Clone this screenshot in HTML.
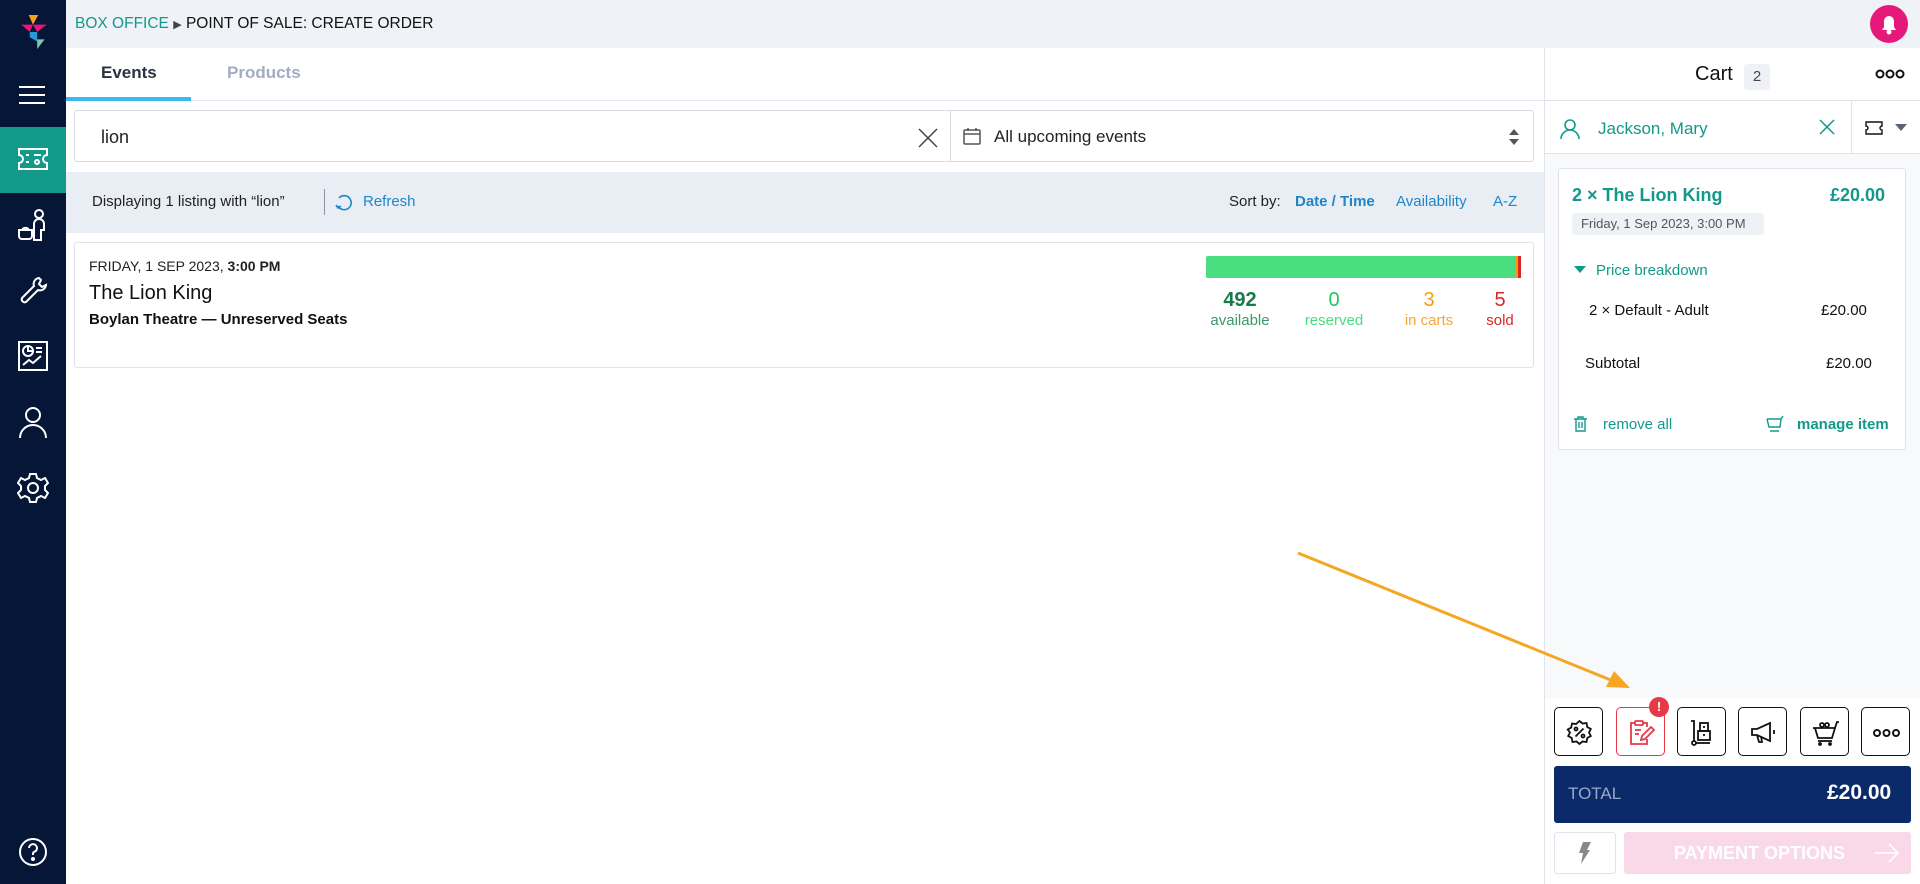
<!DOCTYPE html>
<html><head><meta charset="utf-8"><style>
*{box-sizing:border-box;margin:0;padding:0}
body{width:1920px;height:884px;overflow:hidden;font-family:"Liberation Sans",sans-serif;background:#fff;position:relative;color:#111}
.abs{position:absolute}
.side{left:0;top:0;width:66px;height:884px;background:#061636}
.side svg{position:absolute;left:17px}
.top{left:66px;top:0;width:1854px;height:48px;background:#eff2f7}
.teal{color:#12998a}
.btn{position:absolute;top:707px;width:49px;height:49px;border:1.5px solid #111;border-radius:5px;background:#fff}
.btn svg{position:absolute;left:11px;top:11px}
</style></head><body>
<div class="abs side">
 <svg style="top:14px;left:20px" width="28" height="36" viewBox="0 0 26 34"><polygon points="8,1 17,1 12,10" fill="#f7a21b"/><polygon points="1,10 12,10 9,17" fill="#e6197a"/><polygon points="12,10 25,10 16,17" fill="#e6197a"/><polygon points="9,17 16,17 16,26 9,22" fill="#2a9ad6"/><polygon points="16,24 23,24 16,33" fill="#7fc9a8"/></svg>
 <svg style="top:84px" width="30" height="22" viewBox="0 0 30 22" stroke="#fff" stroke-width="2"><line x1="2" y1="3" x2="28" y2="3"/><line x1="2" y1="11" x2="28" y2="11"/><line x1="2" y1="19" x2="28" y2="19"/></svg>
 <div class="abs" style="left:0;top:127px;width:66px;height:66px;background:#12998a"></div>
 <svg style="top:146px" width="32" height="26" viewBox="0 0 32 26" fill="none" stroke="#fff" stroke-width="2"><path d="M2 3h28v6a4 4 0 0 0 0 8v6H2v-6a4 4 0 0 0 0-8z"/><line x1="9" y1="9" x2="12" y2="9"/><line x1="9" y1="16" x2="12" y2="16"/><line x1="17" y1="9" x2="24" y2="9"/><circle cx="20" cy="16" r="2"/></svg>
 <svg style="top:208px" width="32" height="34" viewBox="0 0 32 34" fill="none" stroke="#fff" stroke-width="2"><circle cx="22" cy="6" r="4"/><path d="M17 32V16a5 5 0 0 1 10 0v6h-3v10z"/><path d="M2 22h13v6a3 3 0 0 1-3 3H5a3 3 0 0 1-3-3z"/><path d="M5 22a4 4 0 0 1 7 0"/></svg>
 <svg style="top:275px" width="32" height="32" viewBox="0 0 32 32" fill="none" stroke="#fff" stroke-width="2"><path d="M22 3a6 6 0 0 0-5 8L5 23a3 3 0 0 0 4 4l12-12a6 6 0 0 0 8-5l-4 2-3-3 2-4z"/></svg>
 <svg style="top:340px" width="32" height="32" viewBox="0 0 32 32" fill="none" stroke="#fff" stroke-width="2"><rect x="2" y="2" width="28" height="28"/><circle cx="11" cy="11" r="5"/><path d="M11 6v5h5"/><line x1="19" y1="8" x2="25" y2="8"/><line x1="19" y1="12" x2="25" y2="12"/><path d="M6 25l6-5 4 3 8-7"/></svg>
 <svg style="top:405px" width="32" height="34" viewBox="0 0 32 34" fill="none" stroke="#fff" stroke-width="2"><circle cx="16" cy="10" r="7"/><path d="M3 33a13 13 0 0 1 26 0"/></svg>
 <svg style="top:472px" width="32" height="32" viewBox="0 0 32 32" fill="none" stroke="#fff" stroke-width="2"><circle cx="16" cy="16" r="5"/><path d="M13 2h6l1 4 4 2 4-2 3 5-3 3v4l3 3-3 5-4-2-4 2-1 4h-6l-1-4-4-2-4 2-3-5 3-3v-4l-3-3 3-5 4 2 4-2z"/></svg>
 <svg style="top:836px" width="32" height="32" viewBox="0 0 32 32" fill="none" stroke="#fff" stroke-width="2"><circle cx="16" cy="16" r="13"/><path d="M12 12a4 4 0 1 1 5 4c-1 .5-1 1-1 3"/><circle cx="16" cy="23" r="1" fill="#fff"/></svg>
</div>
<div class="abs top">
 <div class="abs" style="left:9px;top:15px;font-size:15.5px"><span class="teal">BOX OFFICE</span> <span style="color:#444;font-size:11px">&#9654;</span> POINT OF SALE: CREATE ORDER</div>
 <div class="abs" style="left:1804px;top:5px;width:38px;height:38px;border-radius:50%;background:#e6197a"><svg width="38" height="38" viewBox="0 0 38 38"><path d="M12 25h14l-2-3v-6a5 5 0 0 0-10 0v6z" fill="#fff"/><circle cx="19" cy="27" r="2.5" fill="#fff"/></svg></div>
</div>
<div class="abs" style="left:66px;top:48px;width:1478px;height:53px;border-bottom:1px solid #e4e8ee"></div>
<div class="abs" style="left:101px;top:63px;font-size:17px;font-weight:bold;color:#2b3240">Events</div>
<div class="abs" style="left:227px;top:63px;font-size:17px;font-weight:bold;color:#a2aec0">Products</div>
<div class="abs" style="left:66px;top:97px;width:125px;height:4px;background:#3bb8ee"></div>
<div class="abs" style="left:74px;top:110px;width:1460px;height:52px;border:1px solid #d7dce3;border-radius:3px"></div>
<div class="abs" style="left:101px;top:127px;font-size:18px;color:#222">lion</div>
<svg class="abs" style="left:918px;top:128px" width="20" height="20" stroke="#444" stroke-width="1.5"><line x1="1" y1="1" x2="19" y2="19"/><line x1="19" y1="1" x2="1" y2="19"/></svg>
<div class="abs" style="left:950px;top:111px;width:1px;height:50px;background:#d7dce3"></div>
<svg class="abs" style="left:963px;top:127px" width="18" height="18" fill="none" stroke="#555" stroke-width="1.5"><rect x="1" y="3" width="16" height="14" rx="1"/><line x1="1" y1="7" x2="17" y2="7"/><line x1="5" y1="1" x2="5" y2="4"/><line x1="13" y1="1" x2="13" y2="4"/></svg>
<div class="abs" style="left:994px;top:127px;font-size:17px;color:#222">All upcoming events</div>
<svg class="abs" style="left:1508px;top:128px" width="12" height="18" fill="#555"><polygon points="6,1 11,7 1,7"/><polygon points="6,17 11,11 1,11"/></svg>
<div class="abs" style="left:66px;top:172px;width:1478px;height:61px;background:#e9eef5"></div>
<div class="abs" style="left:92px;top:193px;font-size:15px;color:#222">Displaying 1 listing with “lion”</div>
<div class="abs" style="left:324px;top:189px;width:1px;height:26px;background:#8895a8"></div>
<svg class="abs" style="left:334px;top:192px" width="20" height="20" fill="none" stroke="#1e86c8" stroke-width="1.6"><path d="M4 14a7 7 0 1 0 1-8"/><polyline points="2,13 4,16 7,14"/></svg>
<div class="abs" style="left:363px;top:193px;font-size:15px;color:#1e86c8">Refresh</div>
<div class="abs" style="left:1229px;top:193px;font-size:15px;color:#222">Sort by:</div>
<div class="abs" style="left:1295px;top:193px;font-size:15px;color:#1e86c8;font-weight:bold">Date / Time</div>
<div class="abs" style="left:1396px;top:193px;font-size:15px;color:#1e86c8">Availability</div>
<div class="abs" style="left:1493px;top:193px;font-size:15px;color:#1e86c8">A-Z</div>
<div class="abs" style="left:74px;top:242px;width:1460px;height:126px;border:1px solid #dfe3e9;border-radius:3px"></div>
<div class="abs" style="left:89px;top:258px;font-size:14px;color:#222">FRIDAY, 1 SEP 2023, <b>3:00 PM</b></div>
<div class="abs" style="left:89px;top:282px;font-size:20px;color:#111">The Lion King</div>
<div class="abs" style="left:89px;top:311px;font-size:15px;font-weight:bold;color:#111">Boylan Theatre — Unreserved Seats</div>
<div class="abs" style="left:1206px;top:256px;width:313px;height:22px;background:#4ade80;border-radius:2px"></div>
<div class="abs" style="left:1516px;top:256px;width:2px;height:22px;background:#f59e0b"></div>
<div class="abs" style="left:1518px;top:256px;width:3px;height:22px;background:#dc2626"></div>
<div class="abs" style="left:1196px;top:289px;width:88px;text-align:center;font-size:20px;font-weight:bold;color:#167a4b">492</div>
<div class="abs" style="left:1196px;top:312px;width:88px;text-align:center;font-size:15px;color:#3a9a68">available</div>
<div class="abs" style="left:1290px;top:289px;width:88px;text-align:center;font-size:20px;color:#22c55e">0</div>
<div class="abs" style="left:1290px;top:312px;width:88px;text-align:center;font-size:15px;color:#4ade80">reserved</div>
<div class="abs" style="left:1385px;top:289px;width:88px;text-align:center;font-size:20px;color:#f59e0b">3</div>
<div class="abs" style="left:1385px;top:312px;width:88px;text-align:center;font-size:15px;color:#f8a53a">in carts</div>
<div class="abs" style="left:1470px;top:289px;width:60px;text-align:center;font-size:20px;color:#dc2626">5</div>
<div class="abs" style="left:1470px;top:312px;width:60px;text-align:center;font-size:15px;color:#dc2626">sold</div>
<div class="abs" style="left:1544px;top:48px;width:376px;height:836px;background:#f7f9fb;border-left:1px solid #e0e4ea"></div>
<div class="abs" style="left:1545px;top:48px;width:375px;height:105px;background:#fff"></div>
<div class="abs" style="left:1545px;top:100px;width:375px;height:1px;background:#e0e4ea"></div>
<div class="abs" style="left:1545px;top:153px;width:375px;height:1px;background:#e0e4ea"></div>
<div class="abs" style="left:1851px;top:101px;width:1px;height:52px;background:#e0e4ea"></div>
<div class="abs" style="left:1695px;top:63px;font-size:20px;color:#111">Cart</div>
<div class="abs" style="left:1744px;top:64px;width:26px;height:26px;background:#eef1f5;border-radius:3px;text-align:center;line-height:26px;font-size:15px;color:#445">2</div>
<svg class="abs" style="left:1875px;top:68px" width="30" height="12" fill="none" stroke="#111" stroke-width="2"><circle cx="5" cy="6" r="3.5"/><circle cx="15" cy="6" r="3.5"/><circle cx="25" cy="6" r="3.5"/></svg>
<svg class="abs" style="left:1560px;top:118px" width="20" height="22" fill="none" stroke="#12998a" stroke-width="1.6"><circle cx="10" cy="7" r="5"/><path d="M1 21a9 9 0 0 1 18 0"/></svg>
<div class="abs teal" style="left:1598px;top:119px;font-size:17px">Jackson, Mary</div>
<svg class="abs" style="left:1819px;top:119px" width="16" height="16" stroke="#12998a" stroke-width="1.5"><line x1="1" y1="1" x2="15" y2="15"/><line x1="15" y1="1" x2="1" y2="15"/></svg>
<svg class="abs" style="left:1865px;top:121px" width="18" height="14" fill="none" stroke="#111" stroke-width="1.4"><path d="M1 1h16v4a2 2 0 0 0 0 4v4H1V9a2 2 0 0 0 0-4z"/></svg>
<svg class="abs" style="left:1895px;top:124px" width="12" height="7" fill="#5a6478"><polygon points="0,0 12,0 6,7"/></svg>
<div class="abs" style="left:1558px;top:168px;width:348px;height:282px;background:#fff;border:1px solid #dfe3e9;border-radius:3px"></div>
<div class="abs teal" style="left:1572px;top:185px;font-size:18px;font-weight:bold">2 × The Lion King</div>
<div class="abs teal" style="left:1830px;top:185px;font-size:18px;font-weight:bold">£20.00</div>
<div class="abs" style="left:1572px;top:213px;width:192px;height:22px;background:#eef1f5;border-radius:3px;font-size:13px;color:#555;line-height:22px;padding-left:9px">Friday, 1 Sep 2023, 3:00 PM</div>
<svg class="abs" style="left:1574px;top:266px" width="12" height="8" fill="#12998a"><polygon points="0,0 12,0 6,7"/></svg>
<div class="abs teal" style="left:1596px;top:262px;font-size:15px">Price breakdown</div>
<div class="abs" style="left:1589px;top:302px;font-size:15px">2 × Default - Adult</div>
<div class="abs" style="left:1821px;top:302px;font-size:15px">£20.00</div>
<div class="abs" style="left:1585px;top:355px;font-size:15px">Subtotal</div>
<div class="abs" style="left:1826px;top:355px;font-size:15px">£20.00</div>
<svg class="abs" style="left:1573px;top:416px" width="15" height="16" fill="none" stroke="#12998a" stroke-width="1.4"><path d="M1 3h13M5 3V1h5v2M3 3v12h9V3M6 6v6M9 6v6"/></svg>
<div class="abs teal" style="left:1603px;top:416px;font-size:15px">remove all</div>
<svg class="abs" style="left:1766px;top:415px" width="18" height="18" fill="none" stroke="#12998a" stroke-width="1.4"><path d="M1 4h14l2-3M1 4l2 8h11l1-8M4 16h9"/></svg>
<div class="abs teal" style="left:1797px;top:416px;font-size:15px;font-weight:bold">manage item</div>
<div class="abs" style="left:1545px;top:698px;width:375px;height:186px;background:#fff"></div>
<div class="btn" style="left:1554px"><svg width="27" height="27" viewBox="0 0 27 27" fill="none" stroke="#111" stroke-width="1.8"><path d="M13.5 2l3 2.5 4-.5.8 4 3.5 2-1.8 3.5 1.8 3.5-3.5 2-.8 4-4-.5-3 2.5-3-2.5-4 .5-.8-4-3.5-2 1.8-3.5L1.7 10.5l3.5-2 .8-4 4 .5z"/><line x1="9.5" y1="17.5" x2="17.5" y2="9.5"/><circle cx="10" cy="10" r="1.5"/><circle cx="17" cy="17" r="1.5"/></svg></div>
<div class="btn" style="left:1616px;border-color:#e53948"><svg width="27" height="27" viewBox="0 0 27 27" fill="none" stroke="#e53948" stroke-width="1.8"><path d="M7 4H3v21h16v-5"/><rect x="7" y="2" width="8" height="4" rx="1"/><path d="M15 4h4v4"/><line x1="7" y1="11" x2="13" y2="11"/><line x1="7" y1="15" x2="11" y2="15"/><path d="M13 21l1-4 9-9 3 3-9 9z"/></svg></div>
<div class="abs" style="left:1649px;top:697px;width:20px;height:20px;border-radius:50%;background:#e53948;color:#fff;font-size:13px;font-weight:bold;text-align:center;line-height:20px">!</div>
<div class="btn" style="left:1677px"><svg width="27" height="27" viewBox="0 0 27 27" fill="none" stroke="#111" stroke-width="1.8"><path d="M2 2h3v20"/><circle cx="5" cy="24" r="2"/><path d="M7 24h14"/><rect x="11" y="4" width="8" height="8"/><rect x="9" y="12" width="12" height="9"/><line x1="14" y1="8" x2="16" y2="8"/><line x1="14" y1="16" x2="16" y2="16"/></svg></div>
<div class="btn" style="left:1738px"><svg width="27" height="27" viewBox="0 0 27 27" fill="none" stroke="#111" stroke-width="1.8"><path d="M2 10h5l13-6v18L7 16H2z"/><path d="M7 16l2 7h3l-1-6"/><line x1="24" y1="11" x2="24" y2="15"/></svg></div>
<div class="btn" style="left:1800px"><svg width="27" height="27" viewBox="0 0 27 27" fill="none" stroke="#111" stroke-width="1.8"><path d="M1 9h22l2-6h2"/><path d="M3 9l3 10h14l3-10"/><line x1="6" y1="22" x2="20" y2="22"/><circle cx="8" cy="25" r="1"/><circle cx="18" cy="25" r="1"/><circle cx="10" cy="6" r="2"/><circle cx="15" cy="6" r="2"/></svg></div>
<div class="btn" style="left:1861px"><svg width="27" height="27" viewBox="0 0 27 27" fill="none" stroke="#111" stroke-width="2"><circle cx="4" cy="14" r="3"/><circle cx="13.5" cy="14" r="3"/><circle cx="23" cy="14" r="3"/></svg></div>
<div class="abs" style="left:1554px;top:766px;width:357px;height:57px;background:#0a2a6a;border-radius:3px"></div>
<div class="abs" style="left:1568px;top:784px;font-size:17px;color:#9aa8c8">TOTAL</div>
<div class="abs" style="left:1827px;top:781px;font-size:21px;font-weight:bold;color:#fff">£20.00</div>
<div class="abs" style="left:1554px;top:832px;width:62px;height:42px;border:1px solid #e0e4ea;border-radius:3px"></div>
<svg class="abs" style="left:1578px;top:842px" width="13" height="22" fill="#888"><polygon points="5,0 13,0 9,8 12,8 3,22 5,11 1,11"/></svg>
<div class="abs" style="left:1624px;top:832px;width:287px;height:42px;background:#f9d8e8;border-radius:3px"></div>
<div class="abs" style="left:1674px;top:843px;font-size:18px;font-weight:bold;color:#fff">PAYMENT OPTIONS</div>
<svg class="abs" style="left:1874px;top:843px" width="26" height="20" fill="none" stroke="#fff" stroke-width="1.6"><line x1="1" y1="10" x2="24" y2="10"/><polyline points="15,1 24,10 15,19"/></svg>
<svg class="abs" style="left:0;top:0" width="1920" height="884"><line x1="1298" y1="553" x2="1618" y2="683" stroke="#f5a623" stroke-width="3"/><polygon points="1630,688 1606,687 1614,671" fill="#f5a623"/></svg>
</body></html>
